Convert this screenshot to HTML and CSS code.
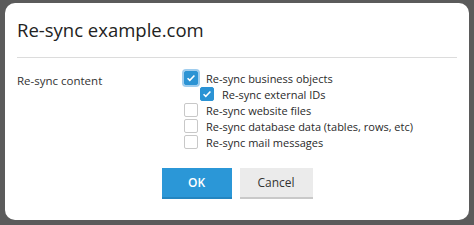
FILE: index.html
```html
<!DOCTYPE html>
<html lang="en">
<head>
  <meta charset="UTF-8" />
  <title>Re-sync example.com</title>
  <link rel="stylesheet" href="styles.css">
</head>
<body>

<div class="dialog">
  <h1 class="dialog-title">Re-sync example.com</h1>

  <div class="form-row">
    <div class="form-label">Re-sync content</div>
    <ul class="options">
      <li><span class="box checked focus"></span>Re-sync business objects</li>
      <li class="nested"><span class="box checked"></span>Re-sync external IDs</li>
      <li><span class="box"></span>Re-sync website files</li>
      <li><span class="box"></span>Re-sync database data (tables, rows, etc)</li>
      <li><span class="box"></span>Re-sync mail messages</li>
    </ul>
  </div>

  <div class="actions">
    <button type="button" class="btn btn-primary">OK</button>
    <button type="button" class="btn">Cancel</button>
  </div>
</div>

</body>
</html>
```

FILE: styles.css
```css
body {
  margin: 0;
  padding: 3px 5px;
  background-color: #5b5b5b;
  font-family: 'Open Sans', 'Noto Sans', sans-serif;
  color: #333;
}

.dialog {
  width: 464px;
  height: 217px;
  box-sizing: border-box;
  background-color: #fff;
  border-radius: 10px;
  padding: 0 12px;
}

.dialog-title {
  margin: 0;
  padding: 15px 0 15px;
  font-size: 18.5px;
  font-weight: normal;
  line-height: 24px;
  border-bottom: 1px solid #dcdcdc;
  color: #222;
}

.form-row {
  display: flex;
  margin-top: 12px;
}

.form-label {
  width: 167px;
  font-size: 11.5px;
  line-height: 16px;
  padding-top: 3px;
}

.options {
  list-style: none;
  margin: 0;
  padding: 0;
  font-size: 11px;
  color: #2a2a2a;
}

.options li {
  display: flex;
  align-items: center;
  height: 16px;
}

.options li.nested {
  padding-left: 16px;
}

.box {
  width: 12px;
  height: 12px;
  margin-right: 8px;
  border: 1px solid #c8c8c8;
  border-radius: 2px;
  background-color: #fff;
  flex-shrink: 0;
}

.box.checked {
  border-color: #2b93d4;
  background: #2b93d4 url("data:image/svg+xml;utf8,<svg xmlns='http://www.w3.org/2000/svg' viewBox='0 0 14 14'><path d='M3 7.2l2.6 2.6L11 4' fill='none' stroke='white' stroke-width='1.8'/></svg>") center / 12px no-repeat;
}

.box.focus {
  box-shadow: 0 0 0 2px #9fcdee;
}

.actions {
  display: flex;
  justify-content: center;
  gap: 8px;
  margin-top: 18px;
}

.btn {
  height: 31px;
  padding: 0;
  border: none;
  border-bottom: 2px solid #c9c9c9;
  background-color: #ebebeb;
  color: #333;
  font-family: inherit;
  font-size: 12px;
  width: 73px;
}

.btn-primary {
  width: 70px;
  background-color: #2b97d7;
  border-bottom-color: #2385c0;
  color: #fff;
  font-weight: 600;
}
```
